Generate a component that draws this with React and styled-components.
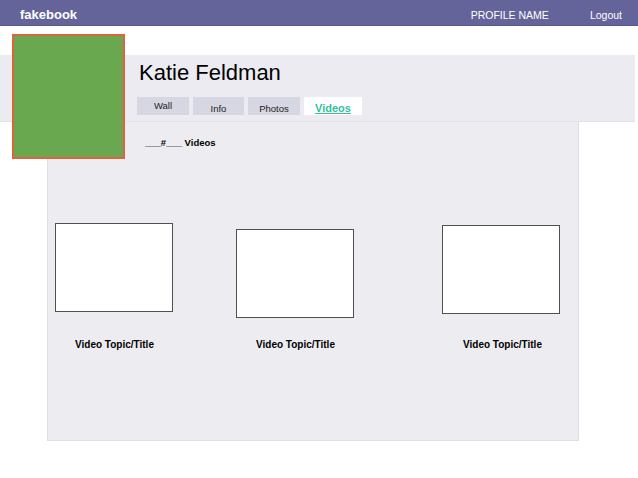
import React from "react";
import styled, { createGlobalStyle } from "styled-components";

const GlobalStyle = createGlobalStyle`
  html, body {
    margin: 0;
    padding: 0;
    background: #ffffff;
    font-family: "Liberation Sans", Arial, sans-serif;
  }
`;

const Page = styled.div`
  position: relative;
  width: 638px;
  height: 478px;
  overflow: hidden;
`;

const TopBar = styled.header`
  display: flex;
  align-items: center;
  height: 26px;
  padding: 4px 16px 0 20px;
  box-sizing: border-box;
  background: #65649a;
  border-bottom: 1px solid #5a5a8c;
  color: #ffffff;
`;

const Brand = styled.div`
  font-size: 13px;
  font-weight: bold;
  flex: 1;
`;

const TopLink = styled.span`
  font-size: 10.5px;
  margin-left: ${(p) => p.$gap || 0}px;
`;

const Band = styled.section`
  margin: 29px 3px 0 0;
  height: 67px;
  padding: 6px 0 0 139px;
  box-sizing: border-box;
  background: #ebebf1;
  border-bottom: 1px solid #e2e2ea;
`;

const Name = styled.h1`
  margin: 0;
  font-size: 22px;
  font-weight: normal;
  line-height: 24px;
  color: #000000;
`;

const Tabs = styled.nav`
  display: flex;
  gap: 4px;
  margin: 12px 0 0 -2px;
`;

const Tab = styled.div`
  display: flex;
  justify-content: center;
  align-items: ${(p) => (p.$top ? "flex-start" : "flex-end")};
  width: ${(p) => p.$w}px;
  height: 18px;
  padding: ${(p) => (p.$top ? "3px 0 0" : "0 0 1px")};
  box-sizing: border-box;
  background: ${(p) => (p.$active ? "#ffffff" : "#d6d7e2")};
  font-size: ${(p) => (p.$active ? "11px" : "9.5px")};
  font-weight: ${(p) => (p.$active ? "bold" : "normal")};
  color: ${(p) => (p.$active ? "#35bf9f" : "#222222")};
  text-decoration: ${(p) => (p.$active ? "underline" : "none")};
`;

const Panel = styled.main`
  margin-left: 47px;
  width: 532px;
  height: 319px;
  box-sizing: border-box;
  background: #ececf1;
  border: 1px solid #dedee5;
  border-top: none;
  padding: 15px 0 0 7px;
`;

const Count = styled.div`
  margin-left: 90px;
  font-size: 9.5px;
  font-weight: bold;
  line-height: 12px;
  color: #000000;
`;

const VideoRow = styled.div`
  display: flex;
  margin-top: 74px;
`;

const Card = styled.div`
  display: flex;
  flex-direction: column;
  align-items: center;
  width: 118px;
  margin-left: ${(p) => p.$dx}px;
`;

const ThumbSlot = styled.div`
  height: 96px;
`;

const Thumb = styled.div`
  width: 118px;
  height: 89px;
  margin-top: ${(p) => p.$dy}px;
  box-sizing: border-box;
  background: #ffffff;
  border: 1px solid #505050;
`;

const Caption = styled.div`
  margin-top: 20px;
  margin-left: ${(p) => p.$nudge || 0}px;
  font-size: 10px;
  font-weight: bold;
  line-height: 12px;
  color: #000000;
  white-space: nowrap;
`;

const Avatar = styled.div`
  position: absolute;
  top: 34px;
  left: 12px;
  width: 113px;
  height: 125px;
  box-sizing: border-box;
  background: #69a84f;
  border: 2px solid #e1623f;
`;

const videos = [
  { dx: 0, dy: 0, nudge: 1 },
  { dx: 63, dy: 6, nudge: 1 },
  { dx: 88, dy: 2, nudge: 3 },
];

export default function App() {
  return (
    <>
      <GlobalStyle />
      <Page>
        <TopBar>
          <Brand>fakebook</Brand>
          <TopLink>PROFILE NAME</TopLink>
          <TopLink $gap={41}>Logout</TopLink>
        </TopBar>
        <Band>
          <Name>Katie Feldman</Name>
          <Tabs>
            <Tab $w={52} $top>
              Wall
            </Tab>
            <Tab $w={51}>Info</Tab>
            <Tab $w={52}>Photos</Tab>
            <Tab $w={58} $active>
              Videos
            </Tab>
          </Tabs>
        </Band>
        <Panel>
          <Count>___#___ Videos</Count>
          <VideoRow>
            {videos.map((v, i) => (
              <Card key={i} $dx={v.dx}>
                <ThumbSlot>
                  <Thumb $dy={v.dy} />
                </ThumbSlot>
                <Caption $nudge={v.nudge}>Video Topic/Title</Caption>
              </Card>
            ))}
          </VideoRow>
        </Panel>
        <Avatar />
      </Page>
    </>
  );
}
